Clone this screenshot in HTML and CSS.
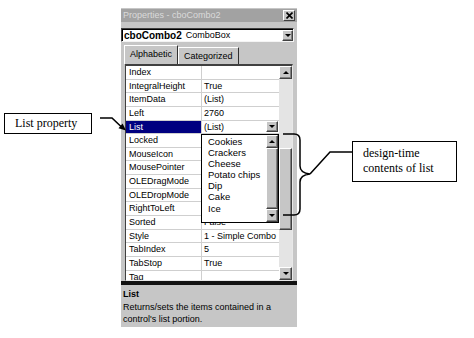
FILE: index.html
```html
<!DOCTYPE html>
<html>
<head>
<meta charset="utf-8">
<link rel="stylesheet" href="styles.css">
</head>
<body>
<div class="canvas">
  <div class="window">
    <div class="titlebar">
      <span>Properties - cboCombo2</span>
      <span class="close"><svg width="7" height="7" viewBox="0 0 7 7"><path d="M0.5 0.5 L6.5 6.5 M6.5 0.5 L0.5 6.5" stroke="#000" stroke-width="1.6"/></svg></span>
    </div>
    <div class="objcombo">
      <span class="objname">cboCombo2</span><span class="objtype">ComboBox</span>
      <span class="btn3d dd-btn"><i class="arr-down"></i></span>
    </div>
    <div class="tabs">
      <div class="tab active">Alphabetic</div>
      <div class="tab">Categorized</div>
    </div>
    <div class="gridwrap">
      <div class="grid">
        <div class="row"><div class="name">Index</div><div class="val"></div></div>
        <div class="row"><div class="name">IntegralHeight</div><div class="val">True</div></div>
        <div class="row"><div class="name">ItemData</div><div class="val">(List)</div></div>
        <div class="row"><div class="name">Left</div><div class="val">2760</div></div>
        <div class="row sel"><div class="name">List</div><div class="val"><span class="vtext">(List)</span><span class="btn3d cell-btn"><i class="arr-down"></i></span></div></div>
        <div class="row"><div class="name">Locked</div><div class="val"></div></div>
        <div class="row"><div class="name">MouseIcon</div><div class="val"></div></div>
        <div class="row"><div class="name">MousePointer</div><div class="val"></div></div>
        <div class="row"><div class="name">OLEDragMode</div><div class="val"></div></div>
        <div class="row"><div class="name">OLEDropMode</div><div class="val"></div></div>
        <div class="row"><div class="name">RightToLeft</div><div class="val"></div></div>
        <div class="row"><div class="name">Sorted</div><div class="val">False</div></div>
        <div class="row"><div class="name">Style</div><div class="val">1 - Simple Combo</div></div>
        <div class="row"><div class="name">TabIndex</div><div class="val">5</div></div>
        <div class="row"><div class="name">TabStop</div><div class="val">True</div></div>
        <div class="row"><div class="name">Tag</div><div class="val"></div></div>
      </div>
      <div class="vscroll">
        <span class="btn3d sbtn"><i class="arr-up"></i></span>
        <span class="btn3d thumb"></span>
        <span class="spacer"></span>
        <span class="btn3d sbtn"><i class="arr-down"></i></span>
      </div>
    </div>
    <div class="splitter"></div>
    <div class="desc">
      <div class="desc-title">List</div>
      <div>Returns/sets the items contained in a control's list portion.</div>
    </div>
  </div>

  <div class="dropdown">
    <div class="items">
      <div>Cookies</div>
      <div>Crackers</div>
      <div>Cheese</div>
      <div>Potato chips</div>
      <div>Dip</div>
      <div>Cake</div>
      <div>Ice</div>
    </div>
    <div class="dscroll">
      <span class="btn3d dbtn"><i class="arr-up"></i></span>
      <span class="btn3d dthumb"></span>
      <span class="btn3d dbtn"><i class="arr-down"></i></span>
    </div>
  </div>

  <div class="callout callout-left">List property</div>
  <div class="callout callout-right">design-time<br>contents of list</div>

  <svg class="overlay" width="474" height="338" viewBox="0 0 474 338">
    <path d="M100 118 L112 118 L121 126.5" fill="none" stroke="#000" stroke-width="1.6"/>
    <polygon points="126,130.5 118.5,128.3 122.6,123.4" fill="#000"/>
    <path d="M283 134 L294 134 Q300 134 300 140 L300 166 Q300 173 310 174 Q300 175 300 182 L300 209 Q300 215 294 215 L283 215" fill="none" stroke="#000" stroke-width="1.5"/>
    <path d="M310 174 L330 152 L352 152" fill="none" stroke="#000" stroke-width="1.5"/>
  </svg>
</div>
</body>
</html>
```

FILE: styles.css
```css
body {
  margin: 0;
  background: #fff;
  font-family: "Liberation Sans", Arial, sans-serif;
  color: #000;
}

.canvas {
  position: relative;
  width: 474px;
  height: 338px;
  overflow: hidden;
  padding: 8px 0 0 121px;
  box-sizing: border-box;
}

.window {
  width: 176px;
  height: 319px;
  background: #c6c6c6;
  display: flex;
  flex-direction: column;
}

.titlebar {
  margin-top: 1px;
  height: 13px;
  background: #a2a2a2;
  color: #dadada;
  font-size: 9px;
  line-height: 13px;
  padding-left: 2px;
  display: flex;
  justify-content: space-between;
  align-items: center;
}

.btn3d {
  box-sizing: border-box;
  background: #c6c6c6;
  border: 1px solid;
  border-color: #fff #404040 #404040 #fff;
  box-shadow: inset -1px -1px 0 #808080;
  display: flex;
  align-items: center;
  justify-content: center;
}

.close {
  width: 12px;
  height: 11px;
  margin-right: 2px;
  box-sizing: border-box;
  background: #c6c6c6;
  border: 1px solid;
  border-color: #fff #404040 #404040 #fff;
  display: flex;
  align-items: center;
  justify-content: center;
}

.arr-down, .arr-up {
  display: block;
  width: 0;
  height: 0;
  border-left: 3px solid transparent;
  border-right: 3px solid transparent;
}
.arr-down { border-top: 3px solid #000; }
.arr-up { border-bottom: 3px solid #000; }

.objcombo {
  margin: 6px 3px 0 0;
  height: 14px;
  box-sizing: border-box;
  background: #fff;
  border: 1px solid;
  border-color: #404040 #f4f4f4 #f4f4f4 #404040;
  box-shadow: inset 1px 1px 0 #000;
  display: flex;
  align-items: center;
}

.objname {
  font-weight: bold;
  font-size: 10px;
  padding-left: 2px;
}

.objtype {
  font-size: 9px;
  margin-left: 4px;
}

.dd-btn {
  margin-left: auto;
  width: 11px;
  height: 11px;
}

.tabs {
  margin: 3px 0 0 3px;
  height: 19px;
  display: flex;
  align-items: flex-end;
}

.tab {
  font-size: 9px;
  height: 17px;
  line-height: 16px;
  padding: 0 5px;
  box-sizing: border-box;
  border: 1px solid;
  border-bottom: none;
  border-color: #fff #303030 transparent #fff;
}

.tab.active {
  height: 19px;
  line-height: 17px;
  padding: 0 5px;
}

.gridwrap {
  margin-left: 4px;
  width: 168px;
  height: 217px;
  box-sizing: border-box;
  border: 1px solid;
  border-top-width: 2px;
  border-color: #404040 #e8e8e8 #e8e8e8 #404040;
  background: #fff;
  display: flex;
}

.grid {
  flex: 1;
  overflow: hidden;
}

.row {
  display: flex;
  height: 13.65px;
  box-sizing: border-box;
  border-bottom: 1px solid #cfcfcf;
  font-size: 9px;
  line-height: 12.65px;
}

.name {
  width: 75px;
  padding-left: 3px;
  box-sizing: border-box;
  white-space: nowrap;
}

.val {
  flex: 1;
  border-left: 1px solid #cfcfcf;
  padding-left: 2px;
  display: flex;
  align-items: center;
  white-space: nowrap;
}

.vtext { flex: 1; }

.cell-btn {
  width: 12px;
  height: 11px;
  margin-right: 1px;
}

.row.sel .name {
  background: #000080;
  color: #fff;
}

.vscroll {
  width: 13px;
  display: flex;
  flex-direction: column;
  background: #e4e4e4;
}

.sbtn {
  width: 13px;
  height: 13px;
  flex: none;
}

.thumb {
  margin-top: 69px;
  height: 82px;
  flex: none;
}

.spacer { flex: 1; }

.splitter {
  height: 4px;
  background: #121212;
}

.desc {
  flex: 1;
  padding: 3px 2px 0 2px;
  font-size: 9px;
  line-height: 12.5px;
}

.desc-title { font-weight: bold; }

.dropdown {
  position: absolute;
  left: 201px;
  top: 134px;
  width: 78px;
  height: 89px;
  box-sizing: border-box;
  border: 1px solid #000;
  background: #fff;
  display: flex;
}

.items {
  flex: 1;
  padding: 1px 0 0 6px;
  font-size: 9.5px;
  line-height: 11.1px;
}

.dscroll {
  width: 12px;
  display: flex;
  flex-direction: column;
}

.dbtn {
  width: 12px;
  height: 13px;
  flex: none;
}

.dthumb { flex: 1; }

.callout {
  position: absolute;
  box-sizing: border-box;
  border: 1px solid #000;
  background: #fff;
  font-family: "Liberation Serif", "Times New Roman", serif;
  font-size: 12px;
}

.callout-left {
  left: 4px;
  top: 113px;
  width: 88px;
  height: 21px;
  padding-left: 10px;
  line-height: 19px;
}

.callout-right {
  left: 352px;
  top: 141px;
  width: 105px;
  height: 41px;
  padding: 4px 0 0 10px;
  line-height: 15px;
}

.overlay {
  position: absolute;
  left: 0;
  top: 0;
  pointer-events: none;
}
```
